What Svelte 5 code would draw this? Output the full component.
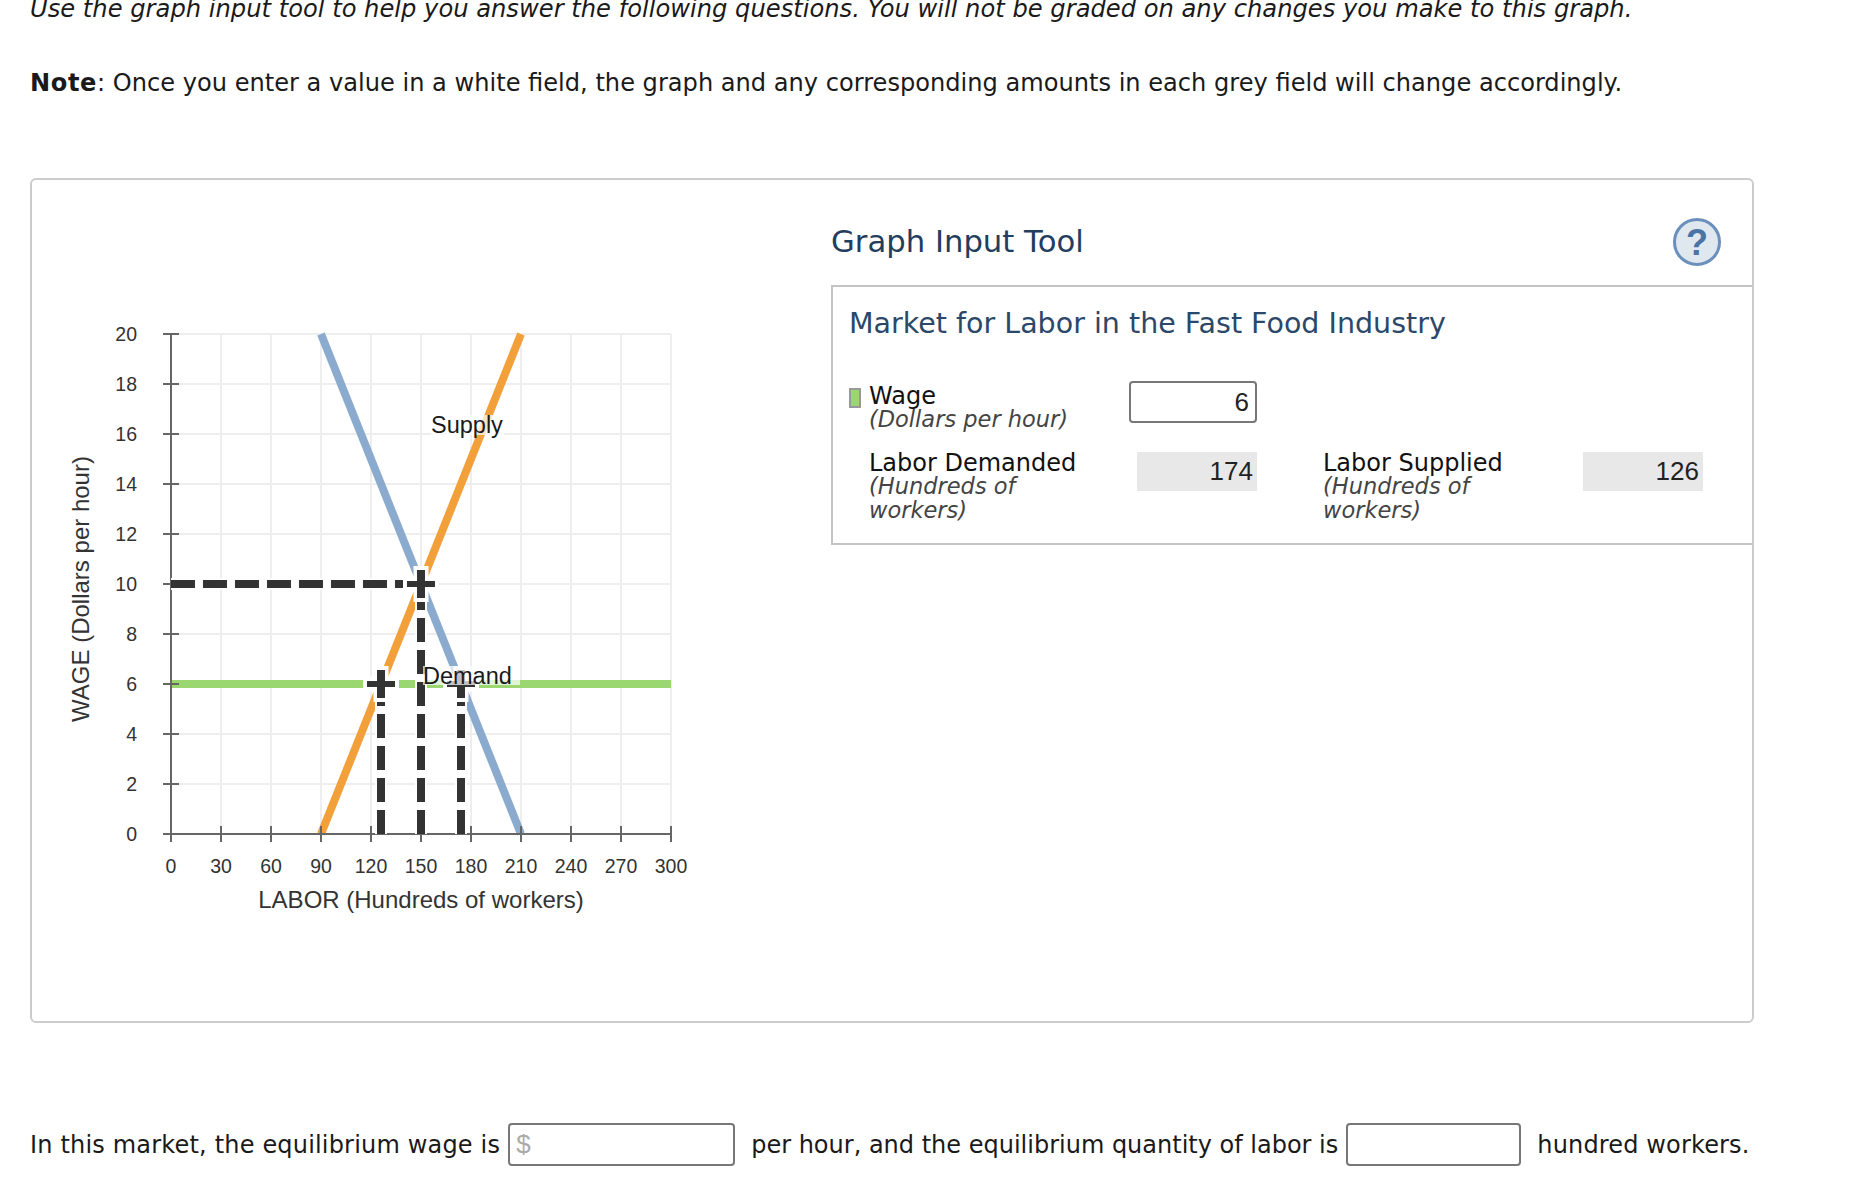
<script>
  const yTicks = [0, 2, 4, 6, 8, 10, 12, 14, 16, 18, 20];
  const xTicks = [0, 30, 60, 90, 120, 150, 180, 210, 240, 270, 300];

  // plot origin inside the svg
  const ox = 139;
  const oy = 654;
  const px = (q) => ox + (q / 300) * 500;
  const py = (w) => oy - (w / 20) * 500;

  const crosses = [
    { q: 150, w: 10 },
    { q: 126, w: 6 },
    { q: 174, w: 6 }
  ];
</script>

<div class="page">
  <p class="intro"><em>Use the graph input tool to help you answer the following questions. You will not be graded on any changes you make to this graph.</em></p>
  <p class="note"><strong>Note</strong>: Once you enter a value in a white field, the graph and any corresponding amounts in each grey field will change accordingly.</p>

  <div class="card">
    <svg class="chart" width="680" height="780" viewBox="0 0 680 780">
      <!-- grid -->
      {#each xTicks as t}
        <line x1={px(t)} y1={py(20)} x2={px(t)} y2={py(0)} class="grid" />
      {/each}
      {#each yTicks as t}
        <line x1={px(0)} y1={py(t)} x2={px(300)} y2={py(t)} class="grid" />
      {/each}

      <!-- curves -->
      <line x1={px(210)} y1={py(0)} x2={px(90)} y2={py(20)} class="curve" stroke="#8aaace" />
      <line x1={px(90)} y1={py(0)} x2={px(210)} y2={py(20)} class="curve" stroke="#f2a03a" />
      <line x1={px(0)} y1={py(6)} x2={px(300)} y2={py(6)} class="curve" stroke="#9bd770" />

      <!-- axes -->
      <line x1={px(0)} y1={py(20)} x2={px(0)} y2={py(0)} class="axis" />
      <line x1={px(0)} y1={py(0)} x2={px(300)} y2={py(0)} class="axis" />
      {#each yTicks as t}
        <line x1={px(0) - 8} y1={py(t)} x2={px(0) + 8} y2={py(t)} class="axis" />
        <text x={px(0) - 34} y={py(t) + 7} class="tick" text-anchor="end">{t}</text>
      {/each}
      {#each xTicks as t}
        <line x1={px(t)} y1={py(0) - 8} x2={px(t)} y2={py(0) + 8} class="axis" />
        <text x={px(t)} y={py(0) + 39} class="tick" text-anchor="middle">{t}</text>
      {/each}

      <!-- dropped lines -->
      <line x1={px(126)} y1={py(0)} x2={px(126)} y2={py(6)} class="halo" />
      <line x1={px(150)} y1={py(0)} x2={px(150)} y2={py(10)} class="halo" />
      <line x1={px(174)} y1={py(0)} x2={px(174)} y2={py(6)} class="halo" />
      <line x1={px(0)} y1={py(10)} x2={px(150)} y2={py(10)} class="halo" />
      <line x1={px(126)} y1={py(0)} x2={px(126)} y2={py(6)} class="dash" />
      <line x1={px(150)} y1={py(0)} x2={px(150)} y2={py(10)} class="dash" />
      <line x1={px(174)} y1={py(0)} x2={px(174)} y2={py(6)} class="dash" />
      <line x1={px(0)} y1={py(10)} x2={px(150)} y2={py(10)} class="dash" />

      {#each crosses as c}
        <path d="M{px(c.q) - 18} {py(c.w)}h36M{px(c.q)} {py(c.w) - 18}v36" class="cross-halo" />
        <line x1={px(c.q) - 14} y1={py(c.w)} x2={px(c.q) + 14} y2={py(c.w)} class="cross arm-h" />
        <line x1={px(c.q)} y1={py(c.w) - 14} x2={px(c.q)} y2={py(c.w) + 14} class="cross arm-v" />
      {/each}

      <!-- curve labels -->
      <rect x="391" y="486" width="97" height="19" fill="#fff" fill-opacity="0.7" />
      <text x="391" y="504" class="label">Demand</text>
      <rect x="399" y="235" width="73" height="20" fill="#fff" fill-opacity="0.7" />
      <text x="399" y="253" class="label">Supply</text>

      <text x="389" y="728" class="title" text-anchor="middle">LABOR (Hundreds of workers)</text>
      <text transform="translate(57 409) rotate(-90)" class="title" text-anchor="middle">WAGE (Dollars per hour)</text>
    </svg>

    <div class="tool">
      <div class="tool-head">
        <h2>Graph Input Tool</h2>
        <svg class="help" width="50" height="50" viewBox="0 0 50 50">
          <circle cx="25" cy="25" r="22.5" fill="#dfe7ef" stroke="#6c90bd" stroke-width="3" />
          <text x="25" y="38" text-anchor="middle">?</text>
        </svg>
      </div>

      <div class="panel">
        <h3>Market for Labor in the Fast Food Industry</h3>

        <div class="row wage">
          <span class="swatch"></span>
          <div class="name">Wage<i>(Dollars per hour)</i></div>
          <input class="field" value="6" readonly />
        </div>

        <div class="row outputs">
          <div class="name narrow">Labor Demanded<i>(Hundreds of workers)</i></div>
          <div class="grey">174</div>
          <div class="name narrow second">Labor Supplied<i>(Hundreds of workers)</i></div>
          <div class="grey">126</div>
        </div>
      </div>
    </div>
  </div>

  <div class="answer">
    <span class="first">In this market, the equilibrium wage is</span>
    <input class="blank dollars" placeholder="$" />
    <span class="after">per hour, and the equilibrium quantity of labor is</span>
    <input class="blank qty" />
    <span class="after last">hundred workers.</span>
  </div>
</div>

<style>
  :global(body) {
    margin: 0;
    background: #fff;
  }

  .page {
    width: 1852px;
    height: 1196px;
    overflow: hidden;
    padding-left: 30px;
    box-sizing: border-box;
    font-family: "DejaVu Sans", Verdana, sans-serif;
    font-size: 24px;
    color: #1a1a1a;
  }

  p {
    margin: 0;
    font-size: 24.2px;
    white-space: nowrap;
    line-height: 30px;
  }

  .intro {
    margin-top: -6px;
  }

  .note {
    margin-top: 44px;
    font-size: 24.1px;
  }

  .note strong {
    letter-spacing: 0.6px;
  }

  .card {
    width: 1724px;
    height: 845px;
    margin-top: 80px;
    box-sizing: border-box;
    border: 2px solid #ccc;
    border-radius: 6px;
    display: flex;
    align-items: flex-start;
  }

  .chart {
    display: block;
    flex: none;
    width: 680px;
    height: 780px;
    font-family: "Liberation Sans", Arial, sans-serif;
  }

  .grid {
    stroke: #eee;
    stroke-width: 2;
  }

  .curve {
    stroke-width: 8;
  }

  .axis {
    stroke: #666;
    stroke-width: 2;
  }

  .tick {
    font-size: 19.5px;
    fill: #333;
  }

  .title {
    font-size: 24px;
    fill: #333;
  }

  .label {
    font-size: 23.5px;
    fill: #1a1a1a;
  }

  .halo {
    stroke: #fff;
    stroke-width: 12;
  }

  .dash {
    stroke: #333;
    stroke-width: 8;
    stroke-dasharray: 24 8;
  }

  .cross-halo {
    stroke: #fff;
    stroke-width: 15;
    fill: none;
  }

  .cross {
    stroke: #333;
  }

  .arm-h {
    stroke-width: 6;
  }

  .arm-v {
    stroke-width: 8;
  }

  .tool {
    flex: 1;
    margin-left: 119px;
    margin-top: 26px;
  }

  .tool-head {
    display: flex;
    align-items: center;
    justify-content: space-between;
    box-sizing: border-box;
    height: 79px;
    padding-right: 30px;
    padding-bottom: 8px;
  }

  h2 {
    margin: 0;
    font-size: 30.7px;
    font-weight: 400;
    color: #223d5e;
  }

  .help {
    display: block;
  }

  .help text {
    font-family: "Liberation Sans", Arial, sans-serif;
    font-size: 36px;
    font-weight: 700;
    fill: #4a74a6;
  }

  .panel {
    height: 260px;
    box-sizing: border-box;
    border: 2px solid #c4c4c4;
    border-right: 0;
    padding: 20px 16px 0;
  }

  h3 {
    margin: 0;
    font-size: 28.5px;
    line-height: 34px;
    font-weight: 400;
    color: #2b4868;
  }

  .row {
    display: flex;
    align-items: flex-start;
  }

  .wage {
    margin-top: 43px;
  }

  .swatch {
    flex: none;
    width: 8px;
    height: 16px;
    margin-top: 4px;
    margin-right: 8px;
    border: 2px solid #999;
    background: #9bd770;
  }

  .name {
    width: 260px;
    line-height: 24px;
    font-size: 24px;
    color: #111;
  }

  .name i {
    display: block;
    margin-top: -1px;
    font-size: 22.5px;
    color: #444;
  }

  .field {
    box-sizing: border-box;
    width: 128px;
    height: 42px;
    margin-top: -3px;
    padding: 0 6px;
    border: 2px solid #777;
    border-radius: 4px;
    text-align: right;
    font-family: "Liberation Sans", Arial, sans-serif;
    font-size: 26px;
    color: #222;
    outline: none;
  }

  .outputs {
    margin-top: 20px;
    padding-left: 20px;
  }

  .narrow {
    width: 268px;
  }

  .narrow i {
    width: 200px;
  }

  .second {
    margin-left: 66px;
    width: 260px;
  }

  .grey {
    box-sizing: border-box;
    width: 120px;
    height: 39px;
    margin-top: 1px;
    line-height: 39px;
    padding-right: 4px;
    background: #e8e8e8;
    text-align: right;
    font-family: "Liberation Sans", Arial, sans-serif;
    font-size: 26px;
    color: #222;
  }

  .answer {
    display: flex;
    align-items: center;
    margin-top: 100px;
    white-space: nowrap;
  }

  .first {
    letter-spacing: 0.18px;
  }

  .last {
    letter-spacing: 0.15px;
  }

  .blank {
    box-sizing: border-box;
    flex: none;
    height: 43px;
    padding: 0 6px;
    border: 2px solid #777;
    border-radius: 4px;
    font-family: "Liberation Sans", Arial, sans-serif;
    font-size: 26px;
    outline: none;
  }

  .blank::placeholder {
    color: #aaa;
  }

  .dollars {
    width: 227px;
    margin-left: 8px;
  }

  .qty {
    width: 175px;
    margin-left: 8px;
  }

  .after {
    margin-left: 16px;
  }
</style>
